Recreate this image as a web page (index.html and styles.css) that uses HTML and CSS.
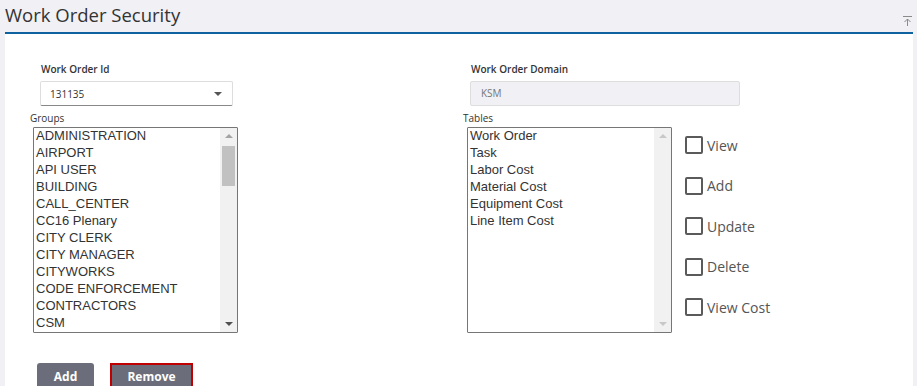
FILE: index.html
```html
<!DOCTYPE html>
<html lang="en">

<head>
  <meta charset="UTF-8">
  <meta name="viewport" content="width=device-width, initial-scale=1.0">
  <title>Work Order Security</title>
  <link rel="stylesheet" href="styles.css">
</head>

<body>
  <div class="panel">
    <div class="panel-head">
      <h1>Work Order Security</h1>
      <span class="collapse">
        <svg width="9" height="10" viewBox="0 0 9 10">
          <path d="M0 0.5h9" stroke="#8a8a8a" stroke-width="1" />
          <path d="M4.5 3v7M1.5 6l3-3 3 3" stroke="#8a8a8a" stroke-width="1" fill="none" />
        </svg>
      </span>
    </div>

    <div class="panel-body">
      <div class="top-row">
        <div class="field field-id">
          <label class="field-label">Work Order Id</label>
          <div class="select">
            <span>131135</span>
            <span class="caret"></span>
          </div>
        </div>
        <div class="field field-domain">
          <label class="field-label">Work Order Domain</label>
          <div class="input-disabled">KSM</div>
        </div>
      </div>

      <div class="list-row">
        <div class="list-col groups-col">
          <label class="list-label">Groups</label>
          <div class="listbox">
            <ul class="options">
              <li>ADMINISTRATION</li>
              <li>AIRPORT</li>
              <li>API USER</li>
              <li>BUILDING</li>
              <li>CALL_CENTER</li>
              <li>CC16 Plenary</li>
              <li>CITY CLERK</li>
              <li>CITY MANAGER</li>
              <li>CITYWORKS</li>
              <li>CODE ENFORCEMENT</li>
              <li>CONTRACTORS</li>
              <li>CSM</li>
            </ul>
            <div class="scrollbar">
              <span class="arrow up"></span>
              <span class="thumb"></span>
              <span class="arrow down"></span>
            </div>
          </div>
        </div>

        <div class="list-col tables-col">
          <label class="list-label">Tables</label>
          <div class="listbox-wrap">
            <div class="listbox">
              <ul class="options">
                <li>Work Order</li>
                <li>Task</li>
                <li>Labor Cost</li>
                <li>Material Cost</li>
                <li>Equipment Cost</li>
                <li>Line Item Cost</li>
              </ul>
              <div class="scrollbar disabled">
                <span class="arrow up"></span>
                <span class="arrow down"></span>
              </div>
            </div>

            <div class="checks">
              <label class="check"><span class="box"></span>View</label>
              <label class="check"><span class="box"></span>Add</label>
              <label class="check"><span class="box"></span>Update</label>
              <label class="check"><span class="box"></span>Delete</label>
              <label class="check"><span class="box"></span>View Cost</label>
            </div>
          </div>
        </div>
      </div>

      <div class="actions">
        <button class="btn btn-add">Add</button>
        <button class="btn btn-remove">Remove</button>
      </div>
    </div>
  </div>
</body>

</html>
```

FILE: styles.css
```css
body {
  margin: 0;
  background-color: #f0f0f5;
  font-family: "Open Sans", "Liberation Sans", sans-serif;
  color: #333333;
  overflow: hidden;
}

.panel {
  margin: 0 4px 0 5px;
}

.panel-head {
  height: 32px;
  display: flex;
  align-items: center;
  justify-content: space-between;
}

.panel-head h1 {
  margin: -2px 0 0;
  font-size: 18.5px;
  font-weight: 400;
  color: #333333;
  line-height: 28px;
}

.collapse {
  display: flex;
  margin-top: 10px;
  margin-right: 1px;
}

.panel-body {
  box-sizing: border-box;
  background-color: #ffffff;
  border-top: 2px solid #0e62a0;
  height: calc(100vh - 32px);
  overflow: hidden;
  padding-top: 28px;
}

/* top row */

.top-row {
  display: flex;
  padding-left: 35px;
}

.field-label {
  display: block;
  font-size: 10px;
  font-weight: 600;
  color: #333333;
  line-height: 14px;
  padding-left: 1px;
  margin-bottom: 5px;
}

.field-id {
  width: 193px;
}

.field-domain {
  width: 270px;
  margin-left: 237px;
}

.select {
  box-sizing: border-box;
  height: 25px;
  border: 1px solid #dddddd;
  border-bottom-color: #888888;
  border-radius: 2px;
  display: flex;
  align-items: center;
  justify-content: space-between;
  padding: 0 10px 0 9px;
  font-size: 10px;
  color: #333333;
}

.caret {
  width: 0;
  height: 0;
  border-left: 4px solid transparent;
  border-right: 4px solid transparent;
  border-top: 4px solid #555555;
}

.input-disabled {
  box-sizing: border-box;
  height: 25px;
  border: 1px solid #dddddd;
  border-radius: 2px;
  background-color: #f0f0f5;
  padding-left: 10px;
  font-size: 10px;
  line-height: 23px;
  color: #777777;
}

/* lists */

.list-row {
  display: flex;
  padding-left: 25px;
  margin-top: 5px;
}

.groups-col {
  width: 433px;
}

.list-label {
  display: block;
  font-size: 10px;
  color: #333333;
  line-height: 14px;
  margin-bottom: 2px;
}

.groups-col .listbox {
  margin-left: 3px;
}

.listbox-wrap {
  display: flex;
  margin-left: 4px;
}

.listbox {
  box-sizing: border-box;
  width: 205px;
  height: 206px;
  border: 1px solid #767676;
  border-radius: 1px;
  display: flex;
  overflow: hidden;
}

.options {
  flex: 1;
  list-style: none;
  margin: -1px 0 0;
  padding: 0 2px;
  font-family: "Liberation Sans", Arial, sans-serif;
  font-size: 13px;
  line-height: 17px;
  color: #333333;
}

.scrollbar {
  width: 17px;
  background-color: #f1f1f1;
  display: flex;
  flex-direction: column;
  align-items: center;
}

.thumb {
  width: 13px;
  height: 40px;
  background-color: #c1c1c1;
  margin-top: 2px;
}

.arrow {
  width: 0;
  height: 0;
  border-left: 4px solid transparent;
  border-right: 4px solid transparent;
  margin: 6px 0;
}

.arrow.up {
  border-bottom: 4px solid #a3a3a3;
}

.arrow.down {
  border-top: 4px solid #505050;
  margin-top: auto;
}

.scrollbar.disabled .arrow.up,
.scrollbar.disabled .arrow.down {
  border-top-color: #c8c8c8;
  border-bottom-color: #c8c8c8;
}

.checks {
  display: flex;
  flex-direction: column;
  gap: 22.5px;
  margin-left: 13px;
  padding-top: 9px;
}

.check {
  display: flex;
  align-items: center;
  height: 18px;
  font-size: 14px;
  color: #555555;
}

.box {
  box-sizing: border-box;
  width: 18px;
  height: 18px;
  border: 2px solid #5a5a5a;
  border-radius: 2px;
  margin-right: 4px;
}

/* buttons */

.actions {
  display: flex;
  gap: 16px;
  padding-left: 32px;
  margin-top: 30px;
}

.btn {
  box-sizing: border-box;
  height: 26px;
  border: 2px solid transparent;
  border-radius: 3px;
  background-color: #6b6e7a;
  color: #ffffff;
  font-family: "Open Sans", sans-serif;
  font-size: 12px;
  font-weight: 700;
  padding: 0;
}

.btn-add {
  width: 57px;
}

.btn-remove {
  width: 83px;
  border-color: #c00000;
  border-radius: 0;
}
```
